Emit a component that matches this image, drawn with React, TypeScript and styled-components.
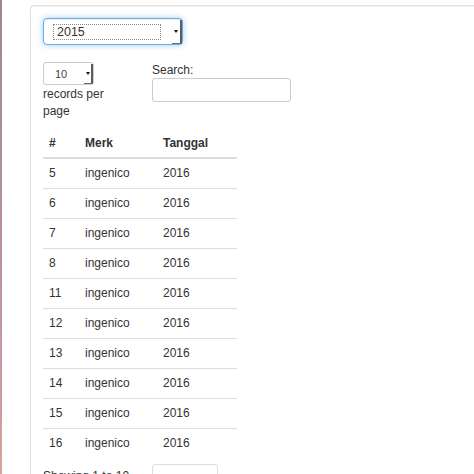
import React from "react";
import styled, { createGlobalStyle } from "styled-components";

const GlobalStyle = createGlobalStyle`
  html, body {
    margin: 0;
    padding: 0;
    height: 474px;
    overflow: hidden;
    background: #ffffff;
  }
  body {
    font-family: "Liberation Sans", Arial, sans-serif;
    font-size: 12px;
    color: #333333;
  }
`;

const Page = styled.div`
  display: flex;
  min-height: 474px;
`;

const Strip = styled.div`
  width: 2px;
  flex-shrink: 0;
  background: linear-gradient(#9f8696, #b8939c 50%, #d8a4a3);
`;

const Gutter = styled.div`
  width: 28px;
  flex-shrink: 0;
`;

const Panel = styled.div`
  flex: 1;
  margin-top: 5px;
  border: 1px solid #dfdfdf;
  border-right: none;
  border-bottom: none;
  border-top-left-radius: 4px;
  box-shadow: inset 0 1px 0 #f1f1f1;
  background: #ffffff;
  padding: 12px 0 0 12px;
`;

const YearSelect = styled.div`
  box-sizing: border-box;
  width: 140px;
  height: 27px;
  display: flex;
  align-items: center;
  padding-left: 9px;
  border: 1px solid #66afe9;
  border-radius: 4px;
  box-shadow: inset 0 1px 1px rgba(0, 0, 0, 0.075), 0 0 6px rgba(102, 175, 233, 0.6);
  background: #fff;
`;

const FocusBox = styled.span`
  box-sizing: border-box;
  width: 108px;
  height: 16px;
  border: 1px dotted #8a8a8a;
  padding-left: 3px;
  font-size: 12.5px;
  line-height: 14px;
  color: #333;
`;

const ArrowCell = styled.span<{ $w: number }>`
  box-sizing: border-box;
  margin-left: auto;
  align-self: stretch;
  width: ${(p) => p.$w}px;
  margin-top: 1px;
  border-right: 2px solid #5c5c5c;
  border-bottom: 1px solid #6a6a6a;
  display: flex;
  align-items: center;
  justify-content: center;
`;

const Triangle = styled.span`
  width: 0;
  height: 0;
  border-left: 2.5px solid transparent;
  border-right: 2.5px solid transparent;
  border-top: 3px solid #111;
`;

const ControlRow = styled.div<{ $top: number }>`
  display: grid;
  grid-template-columns: 109px 1fr;
  margin-top: ${(p) => p.$top}px;
  align-items: start;
`;

const SmallSelect = styled.div`
  box-sizing: border-box;
  width: 51px;
  height: 23px;
  display: flex;
  align-items: center;
  padding-left: 11px;
  border: 1px solid #cccccc;
  border-radius: 3px;
  font-size: 11px;
  color: #444;
  background: #fff;
`;

const WrapText = styled.div<{ $w: number; $top: number }>`
  width: ${(p) => p.$w}px;
  line-height: 16.5px;
  margin-top: ${(p) => p.$top}px;
`;

const FieldLabel = styled.div`
  line-height: 16px;
`;

const TextInput = styled.div<{ $w: number }>`
  box-sizing: border-box;
  width: ${(p) => p.$w}px;
  height: 24px;
  border: 1px solid #cccccc;
  border-radius: 3px;
  background: #fff;
`;

const Table = styled.table`
  border-collapse: collapse;
  table-layout: fixed;
  margin-top: 10px;
  width: 194px;
`;

const Th = styled.th`
  text-align: left;
  font-weight: bold;
  padding: 6px 6px;
  line-height: 16px;
  border-bottom: 2px solid #dddddd;
`;

const Td = styled.td`
  padding: 6px 6px;
  line-height: 17px;
  border-top: 1px solid #dddddd;
`;

const Pager = styled.div`
  box-sizing: border-box;
  width: 66px;
  height: 24px;
  border: 1px solid #dddddd;
  border-radius: 3px;
`;

const rows = [5, 6, 7, 8, 11, 12, 13, 14, 15, 16];

export default function App() {
  return (
    <>
      <GlobalStyle />
      <Page>
        <Strip />
        <Gutter />
        <Panel>
          <YearSelect>
            <FocusBox>2015</FocusBox>
            <ArrowCell $w={10}>
              <Triangle />
            </ArrowCell>
          </YearSelect>
          <ControlRow $top={17}>
            <div>
              <SmallSelect>
                10
                <ArrowCell $w={9}>
                  <Triangle />
                </ArrowCell>
              </SmallSelect>
              <WrapText $w={80} $top={1}>records per page</WrapText>
            </div>
            <div>
              <FieldLabel>Search:</FieldLabel>
              <TextInput $w={139} />
            </div>
          </ControlRow>
          <Table>
            <colgroup>
              <col style={{ width: 36 }} />
              <col style={{ width: 78 }} />
              <col style={{ width: 80 }} />
            </colgroup>
            <thead>
              <tr>
                <Th>#</Th>
                <Th>Merk</Th>
                <Th>Tanggal</Th>
              </tr>
            </thead>
            <tbody>
              {rows.map((n) => (
                <tr key={n}>
                  <Td>{n}</Td>
                  <Td>ingenico</Td>
                  <Td>2016</Td>
                </tr>
              ))}
            </tbody>
          </Table>
          <ControlRow $top={6}>
            <WrapText $w={95} $top={4}>Showing 1 to 10 of 16 entries</WrapText>
            <Pager />
          </ControlRow>
        </Panel>
      </Page>
    </>
  );
}
